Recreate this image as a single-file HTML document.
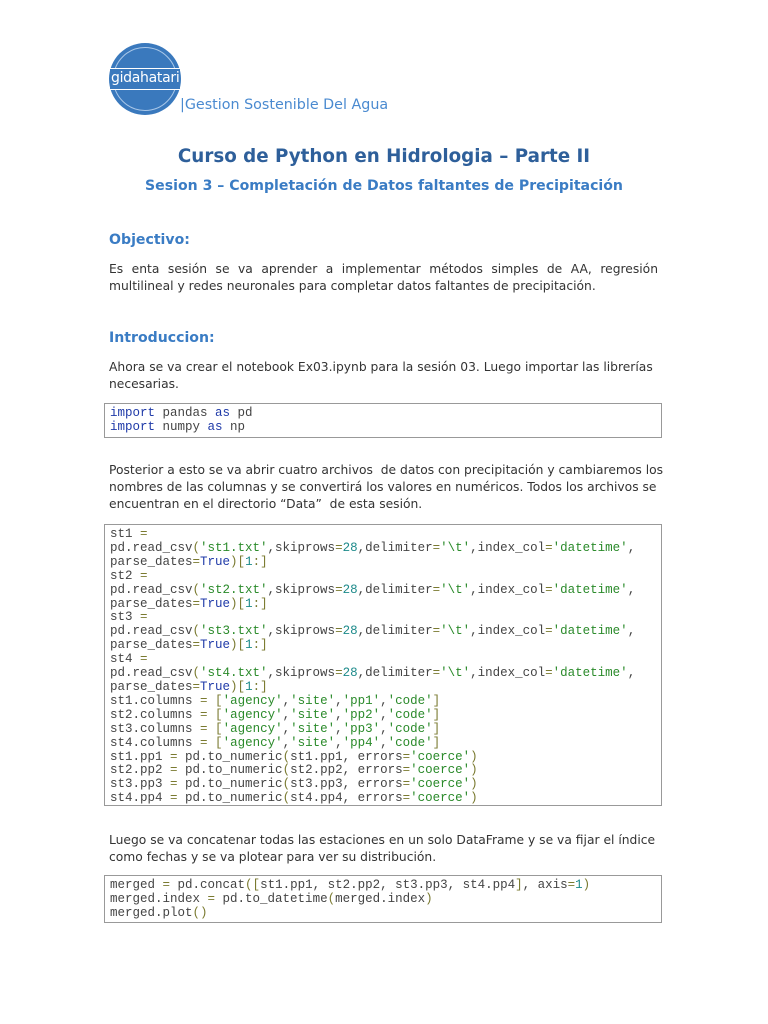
<!DOCTYPE html>
<html><head><meta charset="utf-8"><style>
body{margin:0;background:#fff;width:768px;height:1024px;position:relative;overflow:hidden;font-family:"DejaVu Sans","Liberation Sans",sans-serif;}
.a{position:absolute;}
.t{font-size:12.3px;color:#333;line-height:17px;}
h1,h2,h3{margin:0;font-weight:bold;color:#2e5f9a;}
.code{position:absolute;left:104px;width:558px;border:1px solid #999;box-sizing:border-box;padding:3px 5px;font-family:"Liberation Mono",monospace;font-size:12.5px;line-height:13.9px;color:#444;white-space:pre;}
.k{color:#1f3aa8}.s{color:#2a8a2a}.n{color:#1d8a8a}.p{color:#7a7a30}
</style></head><body>
<div class="a" style="left:109px;top:43px;width:72px;height:72px;border-radius:50%;background:#3a79bd;"></div>
<div class="a" style="left:113px;top:47px;width:62px;height:62px;border-radius:50%;border:1px solid #a9c7e8;"></div>
<div class="a" style="left:110px;top:68px;width:70px;height:20px;background:#3a79bd;border-top:1px solid #fff;border-bottom:1px solid #fff;"></div>
<div class="a" style="left:111px;top:70px;font-size:14px;color:#fff;font-family:'DejaVu Sans',sans-serif;letter-spacing:-0.3px;">gidahatari</div>
<div class="a" style="left:180px;top:97px;font-size:14.3px;color:#4a8ad0;">|Gestion Sostenible Del Agua</div>
<h1 class="a" style="left:0;width:768px;text-align:center;top:146px;font-size:18.3px;">Curso de Python en Hidrologia – Parte II</h1>
<h2 class="a" style="left:0;width:768px;text-align:center;top:178px;font-size:14.1px;color:#3a7cc4;">Sesion 3 – Completación de Datos faltantes de Precipitación</h2>
<h3 class="a" style="left:109px;top:232px;font-size:14.1px;color:#3a7cc4;">Objectivo:</h3>
<div class="a t" style="left:109px;top:261px;width:549px;text-align:justify;text-align-last:left;">Es enta sesión se va aprender a implementar métodos simples de AA, regresión multilineal y redes neuronales para completar datos faltantes de precipitación.</div>
<h3 class="a" style="left:109px;top:330px;font-size:14.1px;color:#3a7cc4;">Introduccion:</h3>
<div class="a t" style="left:109px;top:359px;width:555px;">Ahora se va crear el notebook Ex03.ipynb para la sesión 03. Luego importar las librerías necesarias.</div>
<div class="code" style="top:403px;height:35px;"><span class="k">import</span> pandas <span class="k">as</span> pd
<span class="k">import</span> numpy <span class="k">as</span> np</div>
<div class="a t" style="left:109px;top:462px;width:555px;">Posterior a esto se va abrir cuatro archivos&nbsp; de datos con precipitación y cambiaremos los nombres de las columnas y se convertirá los valores en numéricos. Todos los archivos se encuentran en el directorio “Data”&nbsp; de esta sesión.</div>
<div class="code" style="top:524px;height:282px;">st1 <span class="p">=</span>
pd.read_csv<span class="p">(</span><span class="s">'st1.txt'</span>,skiprows<span class="p">=</span><span class="n">28</span>,delimiter<span class="p">=</span><span class="s">'\t'</span>,index_col<span class="p">=</span><span class="s">'datetime'</span>,
parse_dates<span class="p">=</span><span class="k">True</span><span class="p">)[</span><span class="n">1</span><span class="p">:]</span>
st2 <span class="p">=</span>
pd.read_csv<span class="p">(</span><span class="s">'st2.txt'</span>,skiprows<span class="p">=</span><span class="n">28</span>,delimiter<span class="p">=</span><span class="s">'\t'</span>,index_col<span class="p">=</span><span class="s">'datetime'</span>,
parse_dates<span class="p">=</span><span class="k">True</span><span class="p">)[</span><span class="n">1</span><span class="p">:]</span>
st3 <span class="p">=</span>
pd.read_csv<span class="p">(</span><span class="s">'st3.txt'</span>,skiprows<span class="p">=</span><span class="n">28</span>,delimiter<span class="p">=</span><span class="s">'\t'</span>,index_col<span class="p">=</span><span class="s">'datetime'</span>,
parse_dates<span class="p">=</span><span class="k">True</span><span class="p">)[</span><span class="n">1</span><span class="p">:]</span>
st4 <span class="p">=</span>
pd.read_csv<span class="p">(</span><span class="s">'st4.txt'</span>,skiprows<span class="p">=</span><span class="n">28</span>,delimiter<span class="p">=</span><span class="s">'\t'</span>,index_col<span class="p">=</span><span class="s">'datetime'</span>,
parse_dates<span class="p">=</span><span class="k">True</span><span class="p">)[</span><span class="n">1</span><span class="p">:]</span>
st1.columns <span class="p">=</span> <span class="p">[</span><span class="s">'agency'</span>,<span class="s">'site'</span>,<span class="s">'pp1'</span>,<span class="s">'code'</span><span class="p">]</span>
st2.columns <span class="p">=</span> <span class="p">[</span><span class="s">'agency'</span>,<span class="s">'site'</span>,<span class="s">'pp2'</span>,<span class="s">'code'</span><span class="p">]</span>
st3.columns <span class="p">=</span> <span class="p">[</span><span class="s">'agency'</span>,<span class="s">'site'</span>,<span class="s">'pp3'</span>,<span class="s">'code'</span><span class="p">]</span>
st4.columns <span class="p">=</span> <span class="p">[</span><span class="s">'agency'</span>,<span class="s">'site'</span>,<span class="s">'pp4'</span>,<span class="s">'code'</span><span class="p">]</span>
st1.pp1 <span class="p">=</span> pd.to_numeric<span class="p">(</span>st1.pp1, errors<span class="p">=</span><span class="s">'coerce'</span><span class="p">)</span>
st2.pp2 <span class="p">=</span> pd.to_numeric<span class="p">(</span>st2.pp2, errors<span class="p">=</span><span class="s">'coerce'</span><span class="p">)</span>
st3.pp3 <span class="p">=</span> pd.to_numeric<span class="p">(</span>st3.pp3, errors<span class="p">=</span><span class="s">'coerce'</span><span class="p">)</span>
st4.pp4 <span class="p">=</span> pd.to_numeric<span class="p">(</span>st4.pp4, errors<span class="p">=</span><span class="s">'coerce'</span><span class="p">)</span></div>
<div class="a t" style="left:109px;top:832px;width:555px;">Luego se va concatenar todas las estaciones en un solo DataFrame y se va fijar el índice como fechas y se va plotear para ver su distribución.</div>
<div class="code" style="top:875px;height:48px;">merged <span class="p">=</span> pd.concat<span class="p">([</span>st1.pp1, st2.pp2, st3.pp3, st4.pp4<span class="p">]</span>, axis<span class="p">=</span><span class="n">1</span><span class="p">)</span>
merged.index <span class="p">=</span> pd.to_datetime<span class="p">(</span>merged.index<span class="p">)</span>
merged.plot<span class="p">()</span></div>
</body></html>
